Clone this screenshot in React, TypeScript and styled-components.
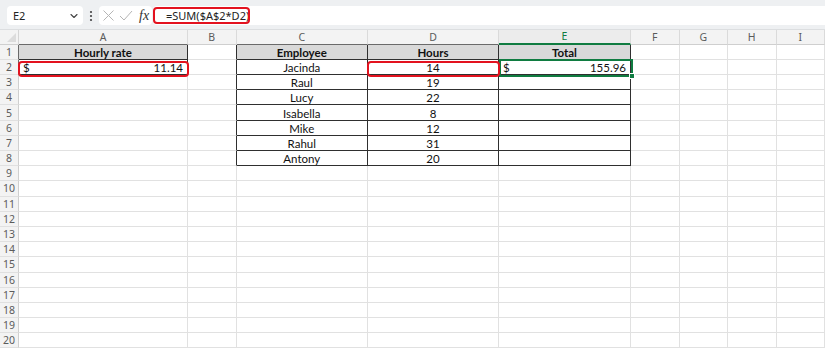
import React from 'react';
import styled, { createGlobalStyle, css } from 'styled-components';

const Global = createGlobalStyle`
  html, body { margin: 0; padding: 0; background: #ffffff; }
  body { font-family: Lato, "Noto Sans", sans-serif; }
  * { box-sizing: border-box; }
`;

const COLS = [19, 169, 48.5, 131.5, 131, 132, 48.5, 48.5, 48.5, 48.5];
const LETTERS = ['A', 'B', 'C', 'D', 'E', 'F', 'G', 'H', 'I'];
const ROWS = 20;
const HEAD_H = 14.7;
const ROW_H = 15.2;

type Range = { c0: number; c1: number; r0: number; r1: number };
const TABLES: Range[] = [
  { c0: 1, c1: 1, r0: 1, r1: 2 },
  { c0: 3, c1: 5, r0: 1, r1: 8 },
];
const inTable = (r: number, c: number) =>
  TABLES.some((t) => r >= t.r0 && r <= t.r1 && c >= t.c0 && c <= t.c1);

type CellData = { text?: string; left?: string; right?: string; bold?: boolean; fill?: boolean };
const DATA: Record<string, CellData> = {
  '1-1': { text: 'Hourly rate', bold: true, fill: true },
  '2-1': { left: '$', right: '11.14' },
  '1-3': { text: 'Employee', bold: true, fill: true },
  '1-4': { text: 'Hours', bold: true, fill: true },
  '1-5': { text: 'Total', bold: true, fill: true },
  '2-5': { left: '$', right: '155.96' },
};
const EMP = [
  ['Jacinda', '14'],
  ['Raul', '19'],
  ['Lucy', '22'],
  ['Isabella', '8'],
  ['Mike', '12'],
  ['Rahul', '31'],
  ['Antony', '20'],
];
EMP.forEach(([n, h], i) => {
  DATA[`${i + 2}-3`] = { text: n };
  DATA[`${i + 2}-4`] = { text: h };
});

const Page = styled.div`
  position: relative;
  width: 825px;
  height: 350px;
  overflow: hidden;
  background: #ffffff;
`;

const Toolbar = styled.div`
  height: 30px;
  display: flex;
  align-items: flex-start;
  padding: 6px 0 0 7px;
  background: #eef0f2;
  border-bottom: 1px solid #dcdee0;
  font-family: "Noto Sans", "Open Sans", sans-serif;
  font-size: 11px;
  color: #222;
`;

const NameBox = styled.div`
  width: 76px;
  height: 19px;
  background: #fff;
  border-radius: 4px;
  display: flex;
  align-items: center;
  justify-content: space-between;
  padding: 0 4px 0 6px;
`;

const Dots = styled.div`
  width: 16px;
  height: 19px;
  display: flex;
  align-items: center;
  justify-content: center;
`;

const FxBox = styled.div`
  width: 53px;
  height: 19px;
  background: #fff;
  border-radius: 4px;
  display: flex;
  align-items: center;
  gap: 4px;
  padding-left: 3px;
`;

const Fx = styled.span`
  font-family: "Liberation Serif", "DejaVu Serif", serif;
  font-style: italic;
  font-size: 14px;
  color: #333;
  margin-left: 2px;
`;

const FormulaBox = styled.div`
  flex: 1;
  height: 19px;
  margin-left: 1px;
  background: #fff;
  border-radius: 4px 0 0 4px;
  display: flex;
  align-items: center;
  padding-left: 13px;
  font-size: 11px;
  color: #222;
`;

const Grid = styled.div`
  display: grid;
  grid-template-columns: ${COLS.map((c) => `${c}px`).join(' ')};
  grid-template-rows: ${HEAD_H}px repeat(${ROWS}, ${ROW_H}px);
  font-size: 11.5px;
`;

const Corner = styled.div`
  background: #f3f3f3;
  border-right: 1px solid #d4d4d4;
  border-bottom: 1px solid #cfcfcf;
  display: flex;
  align-items: flex-end;
  justify-content: flex-end;
  padding: 0 2px 2px 0;
`;

const ColHead = styled.div<{ $active?: boolean; $dark?: boolean }>`
  background: #f3f3f3;
  border-right: 1px solid #dadada;
  border-bottom: 1px solid ${(p) => (p.$dark ? '#6a6a6a' : '#cfcfcf')};
  color: #5b5b5b;
  font-family: "Noto Sans", "Open Sans", sans-serif;
  font-size: 10.5px;
  display: flex;
  align-items: center;
  justify-content: center;
  ${(p) =>
    p.$active &&
    css`
      color: #107c41;
      border-bottom: 2px solid #107c41;
      background: #ececec;
    `}
`;

const RowHead = styled.div<{ $dark?: boolean }>`
  background: #f3f3f3;
  border-right: 1px solid ${(p) => (p.$dark ? '#6a6a6a' : '#cfcfcf')};
  border-bottom: 1px solid #e0e0e0;
  color: #5b5b5b;
  font-family: "Noto Sans", "Open Sans", sans-serif;
  font-size: 10.5px;
  display: flex;
  align-items: center;
  justify-content: center;
`;

const Cell = styled.div<{ $r?: boolean; $b?: boolean; $fill?: boolean; $bold?: boolean; $split?: boolean }>`
  border-right: 1px solid ${(p) => (p.$r ? '#2f2f2f' : '#e1e1e1')};
  border-bottom: 1px solid ${(p) => (p.$b ? '#2f2f2f' : '#e1e1e1')};
  background: ${(p) => (p.$fill ? '#d9d9d9' : '#fff')};
  font-weight: ${(p) => (p.$bold ? 700 : 400)};
  color: #111;
  display: flex;
  align-items: center;
  justify-content: ${(p) => (p.$split ? 'space-between' : 'center')};
  padding: 1px 4px 0 4px;
  white-space: nowrap;
  overflow: hidden;
`;

const Annot = styled.div`
  position: absolute;
  border: 2px solid #e3121f;
  border-radius: 4px;
  pointer-events: none;
`;

const Selection = styled.div`
  position: absolute;
  border: 2px solid #107c41;
  pointer-events: none;
`;

const Handle = styled.div`
  position: absolute;
  right: -4px;
  bottom: -4px;
  width: 6px;
  height: 6px;
  background: #107c41;
  border: 1px solid #fff;
`;

const Chevron = () => (
  <svg width="10" height="10" viewBox="0 0 10 10">
    <path d="M2 3.5 L5 6.5 L8 3.5" fill="none" stroke="#444" strokeWidth="1.1" strokeLinecap="round" strokeLinejoin="round" />
  </svg>
);

const VDots = () => (
  <svg width="4" height="12" viewBox="0 0 4 12">
    <circle cx="2" cy="2" r="1.1" fill="#444" />
    <circle cx="2" cy="6" r="1.1" fill="#444" />
    <circle cx="2" cy="10" r="1.1" fill="#444" />
  </svg>
);

const XIcon = () => (
  <svg width="13" height="13" viewBox="0 0 13 13">
    <path d="M1.5 1.5 L11.5 11.5 M11.5 1.5 L1.5 11.5" stroke="#b5b5b5" strokeWidth="1" fill="none" />
  </svg>
);

const CheckIcon = () => (
  <svg width="14" height="13" viewBox="0 0 14 13">
    <path d="M1 7 L5 11 L13 2" stroke="#b5b5b5" strokeWidth="1" fill="none" />
  </svg>
);

const CornerTri = () => (
  <svg width="9" height="9" viewBox="0 0 9 9">
    <path d="M9 0 L9 9 L0 9 Z" fill="#dcdcdc" />
  </svg>
);

export default function App() {
  const cells: React.ReactNode[] = [];
  cells.push(
    <Corner key="corner">
      <CornerTri />
    </Corner>
  );
  LETTERS.forEach((l, i) => {
    const c = i + 1;
    cells.push(
      <ColHead key={`h${l}`} $active={l === 'E'} $dark={inTable(1, c)}>
        {l}
      </ColHead>
    );
  });
  for (let r = 1; r <= ROWS; r++) {
    cells.push(
      <RowHead key={`r${r}`} $dark={inTable(r, 1)}>
        {r}
      </RowHead>
    );
    for (let c = 1; c <= LETTERS.length; c++) {
      const d = DATA[`${r}-${c}`];
      const t = inTable(r, c);
      const right = t || inTable(r, c + 1);
      const bottom = t || inTable(r + 1, c);
      const split = !!(d && d.left !== undefined);
      cells.push(
        <Cell key={`${r}-${c}`} $r={right} $b={bottom} $fill={d?.fill} $bold={d?.bold} $split={split}>
          {split ? (
            <>
              <span>{d!.left}</span>
              <span>{d!.right}</span>
            </>
          ) : (
            d?.text
          )}
        </Cell>
      );
    }
  }

  return (
    <>
      <Global />
      <Page>
        <Toolbar>
          <NameBox>
            <span>E2</span>
            <Chevron />
          </NameBox>
          <Dots>
            <VDots />
          </Dots>
          <FxBox>
            <XIcon />
            <CheckIcon />
            <Fx>fx</Fx>
          </FxBox>
          <FormulaBox>=SUM($A$2*D2)</FormulaBox>
        </Toolbar>
        <Grid>{cells}</Grid>
        <Selection style={{ left: 498.5, top: 59, width: 134, height: 17.5 }}>
          <Handle />
        </Selection>
        <Annot style={{ left: 153, top: 6.5, width: 96.5, height: 17 }} />
        <Annot style={{ left: 18, top: 60.5, width: 171, height: 16.5 }} />
        <Annot style={{ left: 366.5, top: 60.5, width: 133.5, height: 16.5 }} />
      </Page>
    </>
  );
}
